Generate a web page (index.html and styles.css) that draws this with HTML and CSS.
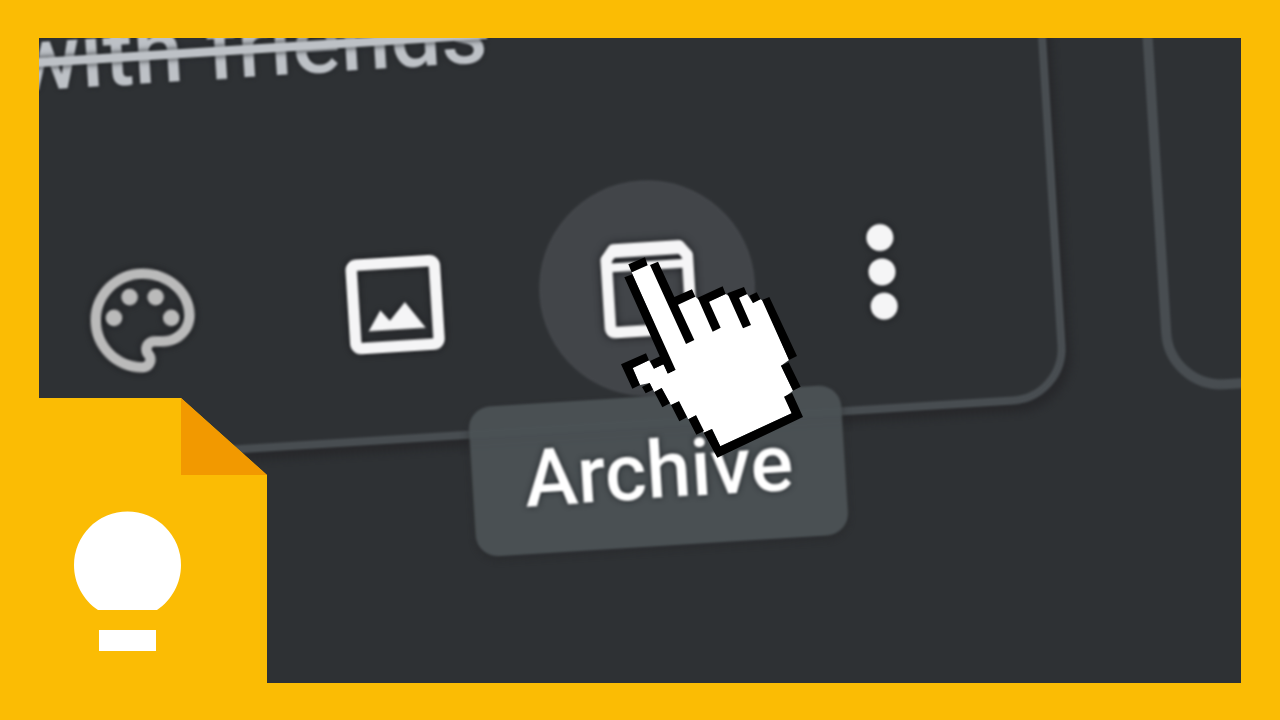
FILE: index.html
```
<!DOCTYPE html>
<html lang="en">
<head>
<meta charset="utf-8">
<meta name="viewport" content="width=device-width, initial-scale=1">
<title>Archive a note</title>
<link rel="stylesheet" href="styles.css">
</head>
<body>
<main class="stage">
  <article class="note">
    <p class="note-text"><s>with friends</s></p>
    <div class="toolbar">
      <button class="tool tool-palette" type="button" aria-label="Background options">
        <svg class="icon icon-upright" viewBox="0 0 24 24" aria-hidden="true">
          <path d="M12 22C6.49 22 2 17.51 2 12S6.49 2 12 2s10 4.04 10 9c0 3.31-2.69 6-6 6h-1.77c-.28 0-.5.22-.5.5 0 .12.05.23.13.33.41.47.64 1.06.64 1.67A2.5 2.5 0 0 1 12 22zm0-18c-4.41 0-8 3.59-8 8s3.59 8 8 8c.28 0 .5-.22.5-.5a.54.54 0 0 0-.14-.35c-.41-.46-.63-1.05-.63-1.65a2.5 2.5 0 0 1 2.5-2.5H16c2.21 0 4-1.79 4-4 0-3.86-3.59-7-8-7z"/>
          <circle cx="6.500" cy="11.500" r="1.600"/><circle cx="9.500" cy="7.500" r="1.600"/><circle cx="14.500" cy="7.500" r="1.600"/><circle cx="17.500" cy="11.500" r="1.600"/>
        </svg>
      </button>
      <button class="tool" type="button" aria-label="Add image">
        <svg class="icon" viewBox="0 0 24 24" aria-hidden="true">
          <rect class="line" x="4" y="4" width="16" height="16" rx="1"/>
          <path d="M6.600 16.800l2.500-3.900 1.700 2.100 3.100-3.400 3.700 5.200z"/>
        </svg>
      </button>
      <div class="tool-wrap">
        <button class="tool tool-active" type="button" aria-describedby="archive-tip" aria-label="Archive">
          <svg class="icon" viewBox="0 0 24 24" aria-hidden="true">
            <path class="line line-round" d="M4.400 6L5.900 4.100h12.600L20 6V19q0 1-1 1H5.400q-1 0-1-1z"/>
            <path d="M5.500 3.400h13v2.300h-13zM4.400 6.700H20v1.700H4.400z"/>
          </svg>
        </button>
        <div class="tooltip" id="archive-tip" role="tooltip">Archive</div>
      </div>
      <button class="tool tool-more" type="button" aria-label="More">
        <svg class="icon" viewBox="0 0 24 24" aria-hidden="true">
          <circle cx="12" cy="5" r="2.600"/><circle cx="12" cy="11.600" r="2.600"/><circle cx="12" cy="18.200" r="2.600"/>
        </svg>
      </button>
    </div>
  </article>
  <article class="note-next" aria-label="Next note"></article>
  <svg class="cursor" viewBox="0 0 660 720" aria-hidden="true">
    <path fill="#fff" d="M95 127L143 106 155 108 222 225 286 200 300 212 327 215 377 192 390 200 417 203 441 192 459 219 481 208 490 212 567 390 543 407 579 482 555 500 575 550 361 649 336 597 311 608 288 556 265 568 237 514 213 525 185 474 163 486 149 459 120 465 98 414 147 391 162 416 190 403 212 425 215 400z"/>
    <path d="M85 103L135 82 143 106 95 127zM73 142L97 133 227 420 203 432zM150 105L174 95 283 330 258 342zM218 203L276 178 286 200 228 227zM293 203L368 169 377 192 327 215 362 293 338 305zM382 190L432 171 441 192 417 203 453 285 429 295zM448 197L470 187 481 208 459 219zM486 210L508 201 591 378 567 390zM543 407L566 397 602 470 579 482zM552 500L576 488 609 561 352 683 311 608 336 597 361 649 575 550zM63 403L138 370 147 391 98 414 120 465 97 476zM150 393L190 374 200 398 162 416zM126 471L149 459 159 479 137 490zM163 486L185 474 210 520 187 532zM213 525L237 514 261 562 238 574zM265 568L288 556 312 603 289 614z"/>
    <path fill="#fff" d="M164 416L190 405 203 432 230 419 240 480 180 470z"/>
  </svg>
</main>
<svg class="logo" viewBox="0 0 267 322" role="img" aria-label="Keep">
  <path fill="#fbbc04" d="M0 0h181l86 77v245H0z"/>
  <path fill="#f29900" d="M181 0l86 77h-86z"/>
  <path fill="#fff" d="M98 212C83 202 74 185 74 167a53.500 53.500 0 0 1 107 0c0 18-9 35-24 45zM99 232h57v21H99z"/>
</svg>
</body>
</html>
```
FILE: styles.css
```
* {
  box-sizing: border-box;
}

body {
  position: relative;
  display: flex;
  min-height: 100vh;
  margin: 0;
  padding: 38px 39px 37px;
  background: #fbbc04;
  font-family: Roboto, "Liberation Sans", sans-serif;
}

.stage {
  position: relative;
  flex: 1;
  overflow: hidden;
  background: #2e3134;
}

.note,
.note-next {
  position: absolute;
  border: 8px solid #484d51;
  filter: blur(1px);
  transform: rotate(-3.6deg);
}

.note {
  right: 172px;
  bottom: 282px;
  display: flex;
  flex-direction: column;
  align-items: flex-end;
  justify-content: flex-end;
  width: 1300px;
  height: 560px;
  padding-bottom: 23px;
  border-radius: 56px;
  box-shadow: 5px 8px 9px #26272a;
  transform-origin: 100% 100%;
}

.note-next {
  bottom: 290px;
  left: calc(100% - 76px);
  width: 600px;
  height: 560px;
  border-width: 10px;
  border-radius: 60px;
  transform-origin: 0 100%;
}

.note-text {
  margin: 0 550px 110px 0;
  color: #bdc1c6;
  font-size: 90px;
  font-weight: 500;
  line-height: 96px;
  text-shadow: 0 0 6px #1c1e21;
  white-space: nowrap;
}

.note-text s {
  text-decoration-thickness: 9px;
}

.toolbar {
  display: flex;
  gap: 37px;
  margin-right: 81px;
}

.tool {
  display: flex;
  align-items: center;
  justify-content: center;
  width: 216px;
  height: 216px;
  padding: 0;
  border: 0;
  border-radius: 50%;
  background: none;
  color: #f5f5f6;
}

.tool-palette {
  color: #bababa;
}

.tool-active {
  background: #424549;
}

.tool-more {
  width: 180px;
}

.tool-wrap {
  position: relative;
}

.icon {
  width: 125px;
  height: 125px;
  fill: currentColor;
  filter: drop-shadow(0 0 4px #151619);
}

.icon-upright {
  transform: rotate(3.6deg);
}

.line {
  fill: none;
  stroke: currentColor;
  stroke-width: 2.2;
}

.line-round {
  stroke-linejoin: round;
}

.tooltip {
  position: absolute;
  top: 100%;
  left: 50%;
  padding: 28px 52px;
  border-radius: 22px;
  background: rgba(75, 81, 84, 0.95);
  box-shadow: 0 4px 8px rgba(36, 36, 38, 0.5);
  color: #fff;
  font-size: 80px;
  font-weight: 500;
  line-height: 94px;
  text-shadow: 0 0 6px #1c1f22;
  transform: translateX(-50%);
}

.cursor {
  position: absolute;
  right: 421px;
  bottom: 213px;
  width: 220px;
  height: 240px;
}

.logo {
  position: absolute;
  bottom: 0;
  left: 0;
  width: 267px;
  height: 322px;
}
```
